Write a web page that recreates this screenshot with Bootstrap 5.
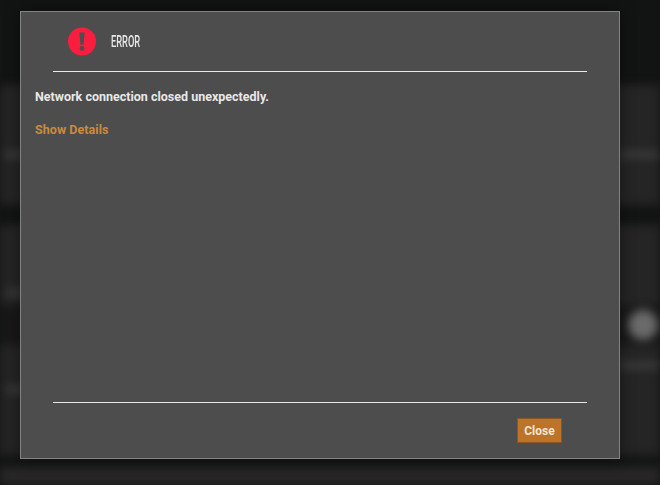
<!DOCTYPE html>
<html lang="en">
<head>
<meta charset="utf-8">
<title>Error</title>
<link rel="stylesheet" href="https://cdn.jsdelivr.net/npm/bootstrap@5.3.0/dist/css/bootstrap.min.css">
<style>
html,body{height:485px;overflow:hidden;background:#121413;}
body{font-family:Roboto,"Liberation Sans",sans-serif;position:relative;}
.backdrop-layer{height:485px;overflow:hidden;filter:blur(5px);padding-top:85px;}
.bg-panel{background:#252525;display:flex;justify-content:space-between;}
.bg-one{height:120px;margin-bottom:20px;padding:67px 0 0 4px;}
.bg-two{height:80px;padding:65px 0 0 6px;}
.bg-band{height:40px;display:flex;justify-content:flex-end;align-items:center;padding-right:2px;background:#171817;}
.bg-three{height:110px;margin-bottom:12px;padding:18px 0 0 6px;}
.bg-four{height:18px;background:#272727;}
.bg-line{display:block;width:24px;height:5px;background:#444;}
.bg-line-long{width:42px;}
.bg-line-low{margin-top:24px;}
.bg-disc{width:30px;height:30px;border-radius:50%;background:#6a6a6a;}
.dlg{position:absolute;left:20px;top:11px;width:600px;height:448px;background:#4d4d4d;border:1px solid #838383;box-shadow:0 0 14px rgba(0,0,0,.45);}
.dlg-head{height:60px;margin:0 32px;padding-left:15px;border-bottom:1px solid #e9e9e9;}
.err-dot{width:28px;height:29px;flex:none;}
.err-title{font-size:16px;line-height:1;color:#e6e6e6;font-weight:500;margin:0 0 0 15px;transform:scaleX(.58);transform-origin:left center;}
.dlg-body{padding:16px 14px 0;font-size:12.5px;font-weight:700;line-height:18px;color:#e8e8e8;}
.dlg-msg{margin:0 0 15px;}
.dlg-link{color:#cb8a3f;text-decoration:none;letter-spacing:.05px;}
.dlg-foot{height:56px;margin:0 32px;border-top:1px solid #e9e9e9;padding:15px 25px 0 0;}
.dlg-btn{background:#bd7428;border:1px solid #8a5520;border-radius:0;color:#f1e6d8;font-size:12px;font-weight:700;line-height:14px;padding:4px 5px;height:25px;width:45px;}
.dlg-btn:hover{background:#bd7428;color:#f1e6d8;border-color:#8a5520;}
</style>
</head>
<body>
<div class="backdrop-layer" aria-hidden="true">
  <div class="bg-panel bg-one"><span class="bg-line"></span><span class="bg-line bg-line-long"></span></div>
  <div class="bg-panel bg-two"><span class="bg-line"></span></div>
  <div class="bg-band"><span class="bg-disc"></span></div>
  <div class="bg-panel bg-three"><span class="bg-line bg-line-low"></span><span class="bg-line bg-line-long"></span></div>
  <div class="bg-four"></div>
</div>
<div class="dlg d-flex flex-column" role="dialog">
  <div class="dlg-head d-flex align-items-center">
    <svg class="err-dot" viewBox="0 0 28 29" aria-hidden="true"><circle cx="14" cy="14.5" r="14" fill="#fb1d3e"/><path d="M11.4 5.5h5.2l-1 12h-3.2z" fill="#4d4d4d"/><circle cx="14" cy="21.4" r="2.4" fill="#4d4d4d"/></svg>
    <h5 class="err-title">ERROR</h5>
  </div>
  <div class="dlg-body flex-grow-1">
    <p class="dlg-msg">Network connection closed unexpectedly.</p>
    <a class="dlg-link" href="#">Show Details</a>
  </div>
  <div class="dlg-foot d-flex justify-content-end align-items-start">
    <button type="button" class="btn dlg-btn">Close</button>
  </div>
</div>
<script src="https://cdn.jsdelivr.net/npm/bootstrap@5.3.0/dist/js/bootstrap.bundle.min.js"></script>
</body>
</html>
